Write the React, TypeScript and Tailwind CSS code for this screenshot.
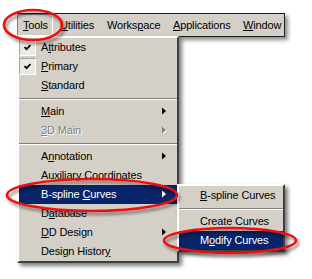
import React from "react";

type RowProps = {
  children: React.ReactNode;
  check?: boolean;
  arrow?: boolean;
  disabled?: boolean;
  active?: boolean;
  sub?: boolean;
};

function Arrow({ color, shadow }: { color: string; shadow?: boolean }) {
  return (
    <svg width="6" height="9" viewBox="0 0 6 9" className="block">
      {shadow && <polygon points="1,1 5,4.5 1,8" fill="#ffffff" />}
      <polygon points="0,0.5 4,4 0,7.5" fill={color} />
    </svg>
  );
}

function CheckBox() {
  return (
    <div className="w-[17px] h-[17px] bg-[#ebe9e4] border-t border-l border-t-[#a6a39c] border-l-[#a6a39c] border-r border-b border-r-white border-b-white flex items-center justify-center">
      <svg width="7" height="7" viewBox="0 0 7 7" className="block">
        <polyline points="0.5,3 2.5,5.2 6.5,1" fill="none" stroke="#000" strokeWidth="1.8" />
      </svg>
    </div>
  );
}

function Row({ children, check, arrow, disabled, active, sub }: RowProps) {
  const tone = active
    ? "bg-[#0a246a] text-white"
    : disabled
    ? "text-[#808080] [text-shadow:1px_1px_0_#ffffff]"
    : "text-black";
  return (
    <div className={`h-[19px] flex items-center ${tone}`}>
      {sub ? (
        <div className="w-[21px] shrink-0" />
      ) : (
        <div className="w-[22px] h-full shrink-0 flex items-center">{check && <CheckBox />}</div>
      )}
      <div className="flex-1 whitespace-nowrap leading-none">{children}</div>
      {arrow && (
        <div className="w-[15px] shrink-0 flex items-center">
          <Arrow color={active ? "#ffffff" : disabled ? "#808080" : "#000000"} shadow={disabled} />
        </div>
      )}
    </div>
  );
}

function Sep() {
  return (
    <div className="h-[7px] flex flex-col justify-center">
      <div className="h-px bg-[#808080]" />
      <div className="h-px bg-white" />
    </div>
  );
}

const U = ({ children }: { children: React.ReactNode }) => (
  <span className="underline underline-offset-[1px]">{children}</span>
);

const menuFrame =
  "bg-[#d4d0c8] border-2 [border-top-color:#ffffff] [border-left-color:#ffffff] [border-right-color:#404040] [border-bottom-color:#404040] shadow-[3px_3px_4px_rgba(0,0,0,0.5)]";

export default function App() {
  return (
    <div
      className="relative w-[312px] h-[279px] bg-white overflow-hidden text-[11px] tracking-[-0.15px] text-black"
      style={{ fontFamily: '"Liberation Sans", Arial, sans-serif' }}
    >
      <div className="pt-[13px] pl-[17px]">
        {/* Menu bar */}
        <div className="w-[268px] h-[24px] bg-[#d4d0c8] border-t border-b border-r border-[#202020] flex items-stretch shadow-[3px_3px_4px_rgba(0,0,0,0.45)]">
          <div className="w-[36px] border-t border-l border-t-[#808080] border-l-[#808080] border-r border-b border-r-white border-b-white flex items-center pl-[5px]">
            <span>
              <U>T</U>ools
            </span>
          </div>
          <div className="w-[47px] flex items-center pl-[7px]">
            <span>
              <U>U</U>tilities
            </span>
          </div>
          <div className="w-[66px] flex items-center pl-[7px]">
            <span>
              Works<U>p</U>ace
            </span>
          </div>
          <div className="w-[70px] flex items-center pl-[7px]">
            <span>
              <U>A</U>pplications
            </span>
          </div>
          <div className="flex-1 flex items-center pl-[7px]">
            <span>
              <U>W</U>indow
            </span>
          </div>
        </div>

        {/* Dropdown */}
        <div className={`w-[162px] -mt-px ${menuFrame}`}>
          <Row check>
            A<U>t</U>tributes
          </Row>
          <Row check>
            <U>P</U>rimary
          </Row>
          <Row>
            <U>S</U>tandard
          </Row>
          <Sep />
          <Row arrow>
            <U>M</U>ain
          </Row>
          <Row arrow disabled>
            <U>3</U>D Main
          </Row>
          <Sep />
          <Row arrow>
            A<U>n</U>notation
          </Row>
          <Row>
            Au<U>x</U>iliary Coordinates
          </Row>
          <Row arrow active>
            B-spline <U>C</U>urves
          </Row>
          <Row>
            D<U>a</U>tabase
          </Row>
          <Row arrow>
            <U>D</U>D Design
          </Row>
          <Row>
            Design Histor<U>y</U>
          </Row>
        </div>
      </div>

      {/* Submenu (popup over the main menu) */}
      <div className={`absolute left-[177px] top-[184px] w-[108px] ${menuFrame}`}>
        <Row sub>
          <U>B</U>-spline Curves
        </Row>
        <Sep />
        <Row sub>Create Curves</Row>
        <Row sub active>
          M<U>o</U>dify Curves
        </Row>
      </div>

      {/* Red annotation ellipses */}
      <svg className="absolute inset-0 pointer-events-none" width="312" height="279" viewBox="0 0 312 279">
        <defs>
          <filter id="sh" x="-20%" y="-40%" width="140%" height="180%">
            <feDropShadow dx="2" dy="3" stdDeviation="1.6" floodColor="#000000" floodOpacity="0.45" />
          </filter>
        </defs>
        <g fill="none" stroke="#f01010" strokeWidth="2.6" filter="url(#sh)">
          <ellipse cx="33" cy="25" rx="29" ry="15" />
          <ellipse cx="92" cy="195" rx="85" ry="16" />
          <ellipse cx="230" cy="240.5" rx="66" ry="12.5" />
        </g>
      </svg>
    </div>
  );
}
